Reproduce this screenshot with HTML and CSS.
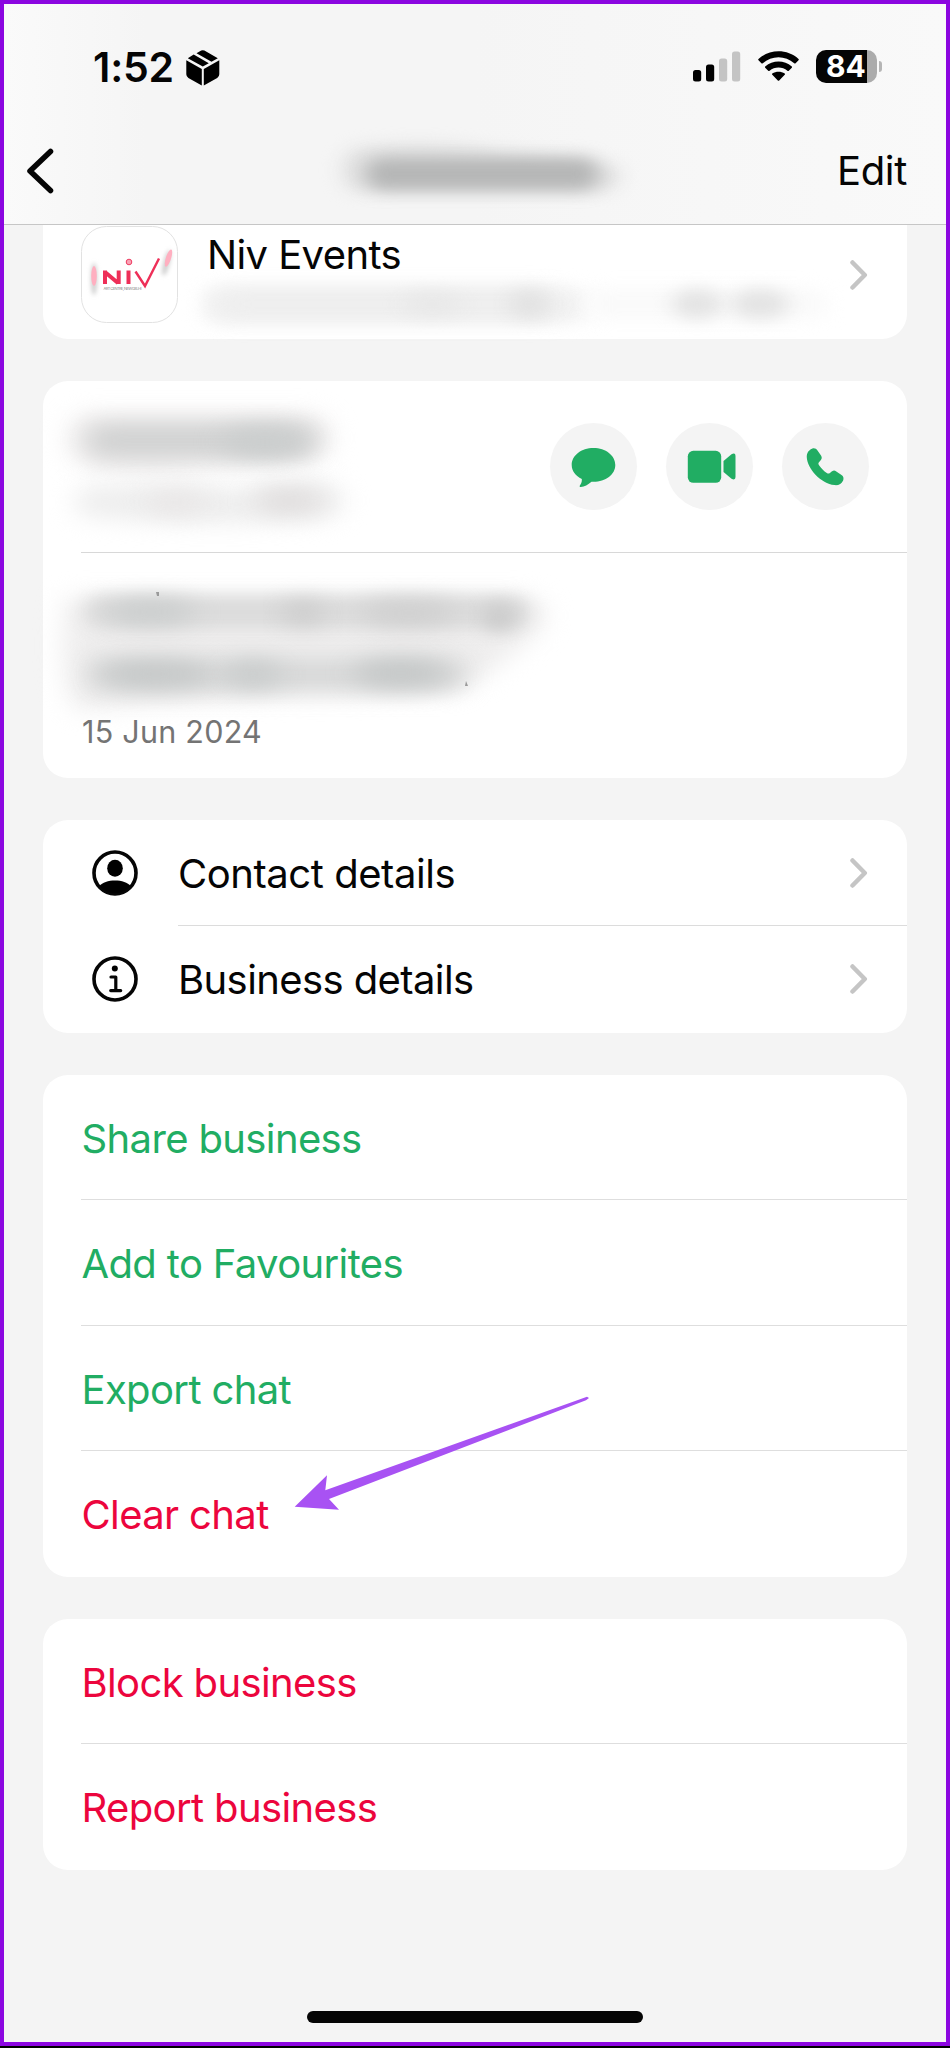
FILE: index.html
```html
<!DOCTYPE html>
<html lang="en">
<head>
<meta charset="utf-8">
<title>Business info</title>
<link rel="stylesheet" href="styles.css">
</head>
<body>
<div class="screen">
  <header class="header">
    <div class="status">
      <span class="time">1:52</span>
      <svg class="box" width="34" height="36" viewBox="0 0 34 36">
        <path d="M.3 10.3 15.8 19V35.6L2.4 27.9Q.3 26.7.3 24.3ZM33.3 10.3 17.8 19V35.6L31.2 27.9Q33.3 26.7 33.3 24.3ZM7.7 4.6 22.8 13.3 16.8 16.5 1.8 8.2ZM10.5 3.2 15.2.6Q16.8-.2 18.4.6L31.8 8.2 25.5 11.8Z"/>
      </svg>
      <svg class="signal" width="48" height="31" viewBox="0 0 48 31">
        <rect x="0" y="19" width="8.2" height="11.6" rx="2.5"/>
        <rect x="13" y="13.4" width="8.2" height="17.2" rx="2.5"/>
        <rect class="dim" x="26" y="7.4" width="8.2" height="23.2" rx="2.5"/>
        <rect class="dim" x="39" y=".6" width="8.2" height="30" rx="2.5"/>
      </svg>
      <svg class="wifi" width="41" height="31" viewBox="0 0 41 31">
        <path d="M.5 9.3Q-.2 8.6.5 7.9C11.5-2.2 29.5-2.2 40.5 7.9Q41.2 8.6 40.5 9.3L37.6 12.2Q36.9 12.8 36.2 12.2C27.5 4.2 13.5 4.2 4.8 12.2Q4.1 12.8 3.4 12.2ZM7.2 16.700Q6.500 16.100 7.200 15.400C14.700 8.700 26.300 8.700 33.800 15.400Q34.500 16.100 33.800 16.700L30.800 19.700Q30.100 20.300 29.400 19.700C24.400 15.500 16.600 15.500 11.600 19.700Q10.900 20.300 10.200 19.700ZM14.300 23.800Q13.600 23.100 14.300 22.500C17.800 20 23.200 20 26.700 22.500Q27.400 23.100 26.700 23.800L21.200 29.500Q20.500 30.200 19.800 29.500Z"/>
      </svg>
      <span class="battery"><span class="cell">84</span><span class="nub"></span></span>
    </div>
    <nav class="nav">
      <svg width="32" height="50" viewBox="0 0 32 50"><path class="back" d="M26.500 5.500 6 25 26.500 44.500"/></svg>
      <svg class="smudge" width="300" height="80" viewBox="0 0 300 80">
        <defs>
          <filter id="soft" x="-40%" y="-150%" width="180%" height="400%" color-interpolation-filters="sRGB"><feGaussianBlur stdDeviation="13 11"/></filter>
          <filter id="soft7" x="-40%" y="-150%" width="180%" height="400%" color-interpolation-filters="sRGB"><feGaussianBlur stdDeviation="10 8"/></filter>
        </defs>
        <path d="M20 18Q100 8 160 20L276 32Q300 44 276 60H20Q0 40 20 18Z" fill="#e0e0e0" filter="url(#soft7)"/>
        <rect x="34" y="27" width="232" height="32" rx="15" fill="#b5b6b6" filter="url(#soft7)"/>
      </svg>
      <span class="edit">Edit</span>
    </nav>
  </header>

  <main class="list">
    <section class="card shop">
      <svg class="avatar" width="97" height="97" viewBox="0 0 97 97">
        <defs><filter id="tiny" x="-100%" y="-50%" width="300%" height="200%"><feGaussianBlur stdDeviation="2"/></filter></defs>
        <rect class="avatar-frame" x=".5" y=".5" width="96" height="96" rx="25"/>
        <ellipse cx="13" cy="53" rx="3" ry="16" fill="#ccc" filter="url(#tiny)"/>
        <ellipse cx="13" cy="50" rx="2.800" ry="10" fill="#ffafc0"/>
        <ellipse cx="86" cy="37" rx="3" ry="13" fill="#ccc" filter="url(#tiny)" transform="rotate(14 86 35)"/>
        <ellipse cx="87.500" cy="32" rx="2.600" ry="9" fill="#ffafc0" transform="rotate(18 87 32)"/>
        <path class="mark" d="M24 58V44.500M24.500 46.500 37 57M37.700 44.500V58M47.500 44.500V58"/>
        <circle cx="48" cy="36" r="2.800" fill="#f9a3b5" stroke="#ee3d62" stroke-width="1"/>
        <path class="mark-thin" d="M54.500 45.500 64 60 78 32.500"/>
        <text x="22.500" y="64.200" class="mark-sub" textLength="38">ART CENTRE, NEW DELHI</text>
      </svg>
      <div class="shop-text">
        <span class="label">Niv Events</span>
        <svg class="smudge" width="640" height="52" viewBox="0 0 640 52">
          <rect x="-4" y="8" width="384" height="36" rx="14" fill="#f2f2f2" filter="url(#soft7)"/>
          <rect x="10" y="13" width="340" height="24" rx="12" fill="#ededed" filter="url(#soft)"/>
          <ellipse cx="225" cy="25" rx="30" ry="11" fill="#e8e8e8" filter="url(#soft7)"/>
          <ellipse cx="322" cy="25" rx="20" ry="14" fill="#e2e2e2" filter="url(#soft7)"/>
          <rect x="380" y="9" width="240" height="32" rx="14" fill="#fafafa" filter="url(#soft7)"/>
          <ellipse cx="490" cy="25" rx="25" ry="15" fill="#e3e3e3" filter="url(#soft7)"/>
          <ellipse cx="553" cy="25" rx="29" ry="15" fill="#e3e3e3" filter="url(#soft7)"/>
        </svg>
      </div>
      <svg class="chev" width="18" height="30" viewBox="0 0 18 30"><path d="M2.500 2.500 14.800 15 2.500 27.500"/></svg>
    </section>

    <section class="card profile">
      <div class="profile-top">
        <svg class="smudge" width="300" height="130" viewBox="0 0 300 130">
          <path d="M0 8H235Q262 28 240 50Q170 55 110 62Q30 70 -4 54Q-24 28 0 8Z" fill="#eeecec" filter="url(#soft)"/>
          <rect x="6" y="17" width="228" height="33" rx="16" fill="#d0d1d1" filter="url(#soft)"/>
          <ellipse cx="184" cy="35" rx="44" ry="14" fill="#cacdcd" filter="url(#soft)"/>
          <path d="M4 80Q90 72 160 82Q210 68 252 78Q276 96 246 112Q130 122 4 110Q-16 96 4 80Z" fill="#eee" filter="url(#soft)"/>
          <ellipse cx="96" cy="95" rx="30" ry="10" fill="#e8e5e5" filter="url(#soft)"/>
          <ellipse cx="208" cy="94" rx="34" ry="12" fill="#dfdcdc" filter="url(#soft)"/>
        </svg>
        <div class="actions">
          <span class="action"><svg width="87" height="87" viewBox=".5 .5 87 87"><path d="M44 25.500c12.200 0 21.800 7.500 21.800 17s-9.600 16.800-21.800 16.800l-2-.1C38.500 62 35 64.500 31.300 64.500c-1.300 0-1.500-.9-.6-2.100 1.700-2.300 1.700-4.200 1.600-6C26 53.300 22.200 48.500 22.200 42.500c0-9.500 9.600-17 21.800-17Z"/></svg></span>
          <span class="action"><svg width="87" height="87" viewBox=".5 .5 87 87"><rect x="22.300" y="28.300" width="33.400" height="32" rx="5.500"/><path d="M58 38.500 66 31.700Q70 29.800 70 33.500V54.500Q70 58.200 66 56.300L58 49.500Z"/></svg></span>
          <span class="action"><svg width="87" height="87" viewBox=".5 .5 87 87"><path d="M30.500 26.200c2.200-.9 4.200-.2 5.500 1.700l3.500 5.200c1.300 2 .9 3.500-.9 5.300-2 2-2.200 2.700-.9 4.600 2 2.900 4.600 5.500 7.600 7.500 1.600 1.100 2.600.7 4.200-.9 1.800-1.800 3.400-2 5.300-.7l5.200 3.500c2 1.300 2.500 3.300 1.600 5.500C60.200 61.500 57 63 53 62.600 39.500 61.200 25.800 45.900 25.300 34.900c-.2-4 1.700-7.300 5.200-8.700Z"/></svg></span>
        </div>
      </div>
      <div class="about">
        <svg class="smudge" width="500" height="126" viewBox="0 0 500 126">
          <path d="M-14 4H450Q478 18 450 46L400 86Q340 102 220 102Q90 108 -4 118Q-26 80-14 4Z" fill="#efeeee" filter="url(#soft)"/>
          <rect x="4" y="3" width="444" height="32" rx="16" fill="#dbdbdb" filter="url(#soft7)"/>
          <ellipse cx="70" cy="19" rx="46" ry="12" fill="#c9cccc" filter="url(#soft)"/>
          <ellipse cx="222" cy="20" rx="22" ry="11" fill="#cacaca" filter="url(#soft)"/>
          <ellipse cx="328" cy="20" rx="48" ry="12" fill="#cecece" filter="url(#soft)"/>
          <ellipse cx="418" cy="24" rx="17" ry="15" fill="#cccccc" filter="url(#soft7)"/>
          <rect x="6" y="66" width="380" height="31" rx="15" fill="#d6d7d7" filter="url(#soft)"/>
          <ellipse cx="75" cy="81" rx="56" ry="13" fill="#c4c7c7" filter="url(#soft)"/>
          <ellipse cx="172" cy="81" rx="30" ry="13" fill="#c8cbcb" filter="url(#soft)"/>
          <ellipse cx="320" cy="80" rx="48" ry="14" fill="#c4c7c7" filter="url(#soft)"/>
          <path d="M75 -1h3v4h-2zM385 88l2 5h-3z" fill="#9a9a9a"/>
        </svg>
        <span class="date">15 Jun 2024</span>
      </div>
    </section>

    <section class="card details">
      <div class="row">
        <svg class="icon" width="46" height="46" viewBox="0 0 46 46"><circle class="ring" cx="23" cy="23" r="21"/><ellipse cx="23" cy="18.200" rx="7.800" ry="8.500"/><path d="M7.500 36C12.500 28.500 33.500 28.500 38.500 36A20.500 20.500 0 0 1 7.500 36Z"/></svg>
        <div class="row-body"><span class="label contact">Contact details</span><svg class="chev" width="18" height="30" viewBox="0 0 18 30"><path d="M2.500 2.500 14.800 15 2.500 27.500"/></svg></div>
      </div>
      <div class="row">
        <svg class="icon" width="46" height="46" viewBox="0 0 46 46"><circle class="ring" cx="23" cy="23" r="21"/><circle cx="22.800" cy="12.500" r="3"/><path class="info" d="M19 21h4.800v13.500M18.700 34.600h10"/></svg>
        <div class="row-body"><span class="label">Business details</span><svg class="chev" width="18" height="30" viewBox="0 0 18 30"><path d="M2.500 2.500 14.800 15 2.500 27.500"/></svg></div>
      </div>
    </section>

    <section class="card links">
      <div class="link green">Share business</div>
      <div class="link green">Add to Favourites</div>
      <div class="link green">Export chat</div>
      <div class="link red">Clear chat</div>
      <svg class="arrow" width="300" height="120" viewBox="0 0 300 120"><path d="M4.700 111.700 37 80.300 35.300 95.300 297 1.700 299 3 296 5.200 39 104 49 114.800Z"/></svg>
    </section>

    <section class="card links">
      <div class="link red">Block business</div>
      <div class="link red">Report business</div>
    </section>
  </main>
  <div class="home"></div>
</div>
</body>
</html>
```
FILE: styles.css
```css
* { box-sizing: border-box; }
body {
  margin: 0;
  background: #000;
  font-family: Inter, "Liberation Sans", sans-serif;
  color: #050505;
}
svg { display: block; flex: none; }
.screen {
  display: flex;
  flex-direction: column;
  width: 950px;
  height: 2046px;
  border: 4px solid #8b06e0;
  background: #f4f4f4;
  overflow: hidden;
}
.header {
  flex: none;
  height: 221px;
  border-bottom: 1px solid #c6c6c6;
  background: linear-gradient(90deg, #fafafa, #f5f5f5 15%, #f5f5f5 50%, #f9f9f9);
}
.status {
  display: flex;
  align-items: flex-start;
  padding: 46px 64px 0 89px;
  height: 114px;
}
.time {
  width: 82px;
  margin-top: -7px;
  font-size: 41px;
  line-height: 48px;
  font-weight: 600;
  letter-spacing: -0.200px;
}
.box { margin-left: 11px; }
.signal { margin-left: auto; margin-top: 1px; }
.signal .dim { fill: #c4c4c4; }
.wifi { margin: 1px 0 0 17px; }
.battery { display: flex; align-items: center; margin-left: 17px; gap: 2px; }
.cell {
  width: 61px;
  height: 33px;
  padding-left: 10px;
  border-radius: 10px;
  background: linear-gradient(90deg, #050505 51px, #ababab 51px);
  color: #fff;
  font-size: 30px;
  line-height: 33px;
  font-weight: 700;
}
.nub { width: 3px; height: 11px; border-radius: 0 5px 5px 0; background: #b5b5b5; }
.nav {
  display: flex;
  align-items: center;
  padding: 0 39px 0 20px;
  height: 106px;
}
.nav > svg:first-child { margin-top: -1px; }
.back { fill: none; stroke: #050505; stroke-width: 5.500; stroke-linecap: round; stroke-linejoin: round; }
.smudge { overflow: visible; }
.nav .smudge { margin-left: 276px; }
.edit {
  margin-left: auto;
  font-size: 40px;
  line-height: 48px;
  letter-spacing: -0.300px;
}
.list { display: flex; flex-direction: column; gap: 42px; padding: 0 39px; }
.card { position: relative; flex: none; border-radius: 25px; background: #fff; }
.label { font-size: 40px; line-height: 48px; letter-spacing: -0.600px; white-space: nowrap; }
.contact { letter-spacing: -0.450px; }
.chev path { fill: none; stroke: #c5c5c5; stroke-width: 4.500; stroke-linecap: round; stroke-linejoin: round; }

.shop {
  display: flex;
  height: 114px;
  padding: 1px 39px 0 38px;
  border-radius: 0 0 25px 25px;
}
.avatar-frame { fill: #fff; stroke: #e2e2e2; }
.mark { fill: none; stroke: #ee2f58; stroke-width: 4; }
.mark-thin { fill: none; stroke: #ee2f58; stroke-width: 2.400; }
.mark-sub { font-size: 4px; fill: #888; }
.shop-text { display: flex; flex-direction: column; width: 640px; margin: 5px 0 0 29px; }
.shop .chev { margin: 34px 0 0 auto; }

.profile { height: 397px; padding-left: 38px; }
.profile-top {
  display: flex;
  justify-content: space-between;
  height: 172px;
  padding: 26px 38px 0 0;
  border-bottom: 1px solid #d8d8d8;
}
.actions { display: flex; gap: 29px; margin-top: 16px; }
.action { width: 87px; height: 87px; border-radius: 50%; background: #f4f4f4; }
.action svg { fill: #21ad63; }
.about { display: flex; flex-direction: column; padding-top: 40px; }
.date {
  margin-top: -7px;
  padding-left: 1px;
  font-size: 30.500px;
  line-height: 40px;
  letter-spacing: 0.250px;
  color: #747474;
}

.details { height: 212.500px; margin-top: 0.400px; }
.row { display: flex; align-items: center; height: 106px; padding-left: 49px; }
.ring { fill: none; stroke: #050505; stroke-width: 3.600; }
.info { fill: none; stroke: #050505; stroke-width: 3.200; stroke-linecap: round; stroke-linejoin: round; }
.row-body {
  flex: 1;
  display: flex;
  align-items: center;
  justify-content: space-between;
  height: 106px;
  margin-left: 40px;
  padding-right: 39px;
}
.row-body .label { padding-top: 2px; }
.row:first-child .row-body { border-bottom: 1px solid #dcdcdc; }

.links { padding-left: 38px; }
.link {
  display: flex;
  align-items: center;
  height: 125.500px;
  padding: 1px 0 0 0.500px;
  font-size: 40px;
  letter-spacing: -0.630px;
}
.link:not(:last-of-type) { border-bottom: 1px solid #dedede; padding-top: 2px; }
.green { color: #21ad63; }
.red { color: #ec053d; }
.arrow { position: absolute; left: 247px; top: 320px; fill: #a852f3; }
.home {
  flex: none;
  width: 336px;
  height: 12px;
  margin: auto auto 19px 303px;
  border-radius: 6px;
  background: #050505;
}
```
